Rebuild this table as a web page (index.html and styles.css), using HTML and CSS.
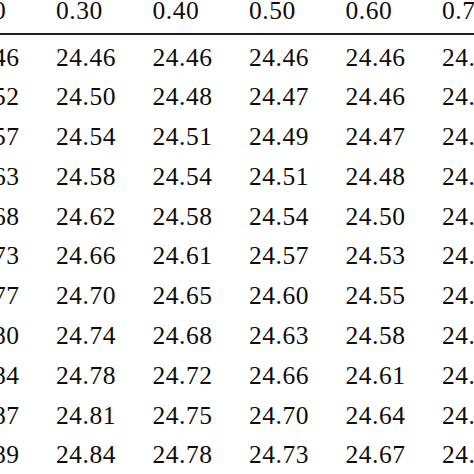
FILE: index.html
```html
<!DOCTYPE html>
<html lang="en">
<head>
<meta charset="utf-8">
<title>Table</title>
<link rel="stylesheet" href="styles.css">
</head>
<body>
<table class="data">
  <thead>
    <tr><th>0.20</th><th>0.30</th><th>0.40</th><th>0.50</th><th>0.60</th><th>0.70</th></tr>
  </thead>
  <tbody>
    <tr><td>24.46</td><td>24.46</td><td>24.46</td><td>24.46</td><td>24.46</td><td>24.46</td></tr>
    <tr><td>24.52</td><td>24.50</td><td>24.48</td><td>24.47</td><td>24.46</td><td>24.45</td></tr>
    <tr><td>24.57</td><td>24.54</td><td>24.51</td><td>24.49</td><td>24.47</td><td>24.46</td></tr>
    <tr><td>24.63</td><td>24.58</td><td>24.54</td><td>24.51</td><td>24.48</td><td>24.46</td></tr>
    <tr><td>24.68</td><td>24.62</td><td>24.58</td><td>24.54</td><td>24.50</td><td>24.47</td></tr>
    <tr><td>24.73</td><td>24.66</td><td>24.61</td><td>24.57</td><td>24.53</td><td>24.49</td></tr>
    <tr><td>24.77</td><td>24.70</td><td>24.65</td><td>24.60</td><td>24.55</td><td>24.51</td></tr>
    <tr><td>24.80</td><td>24.74</td><td>24.68</td><td>24.63</td><td>24.58</td><td>24.53</td></tr>
    <tr><td>24.84</td><td>24.78</td><td>24.72</td><td>24.66</td><td>24.61</td><td>24.56</td></tr>
    <tr><td>24.87</td><td>24.81</td><td>24.75</td><td>24.70</td><td>24.64</td><td>24.59</td></tr>
    <tr><td>24.89</td><td>24.84</td><td>24.78</td><td>24.73</td><td>24.67</td><td>24.62</td></tr>
  </tbody>
</table>
</body>
</html>
```
FILE: styles.css
```css
html, body {
  margin: 0;
  padding: 0;
  overflow: hidden;
  background: #ffffff;
  width: 474px;
  height: 474px;
}

.data {
  border-collapse: collapse;
  table-layout: fixed;
  width: 579px;
  margin-left: -40.5px;
  margin-top: -7px;
  font-family: "Liberation Serif", "Times New Roman", serif;
  font-size: 25.5px;
  letter-spacing: 0.5px;
  color: #0d0d0d;
}

.data th,
.data td {
  width: 96.5px;
  padding: 0;
  text-align: left;
  font-weight: normal;
  white-space: nowrap;
}

.data th {
  line-height: 36px;
  padding-bottom: 4px;
  border-bottom: 2px solid #1e1e1e;
}

.data td {
  line-height: 39.8px;
}

.data tbody tr:first-child td {
  padding-top: 2.5px;
}
```
